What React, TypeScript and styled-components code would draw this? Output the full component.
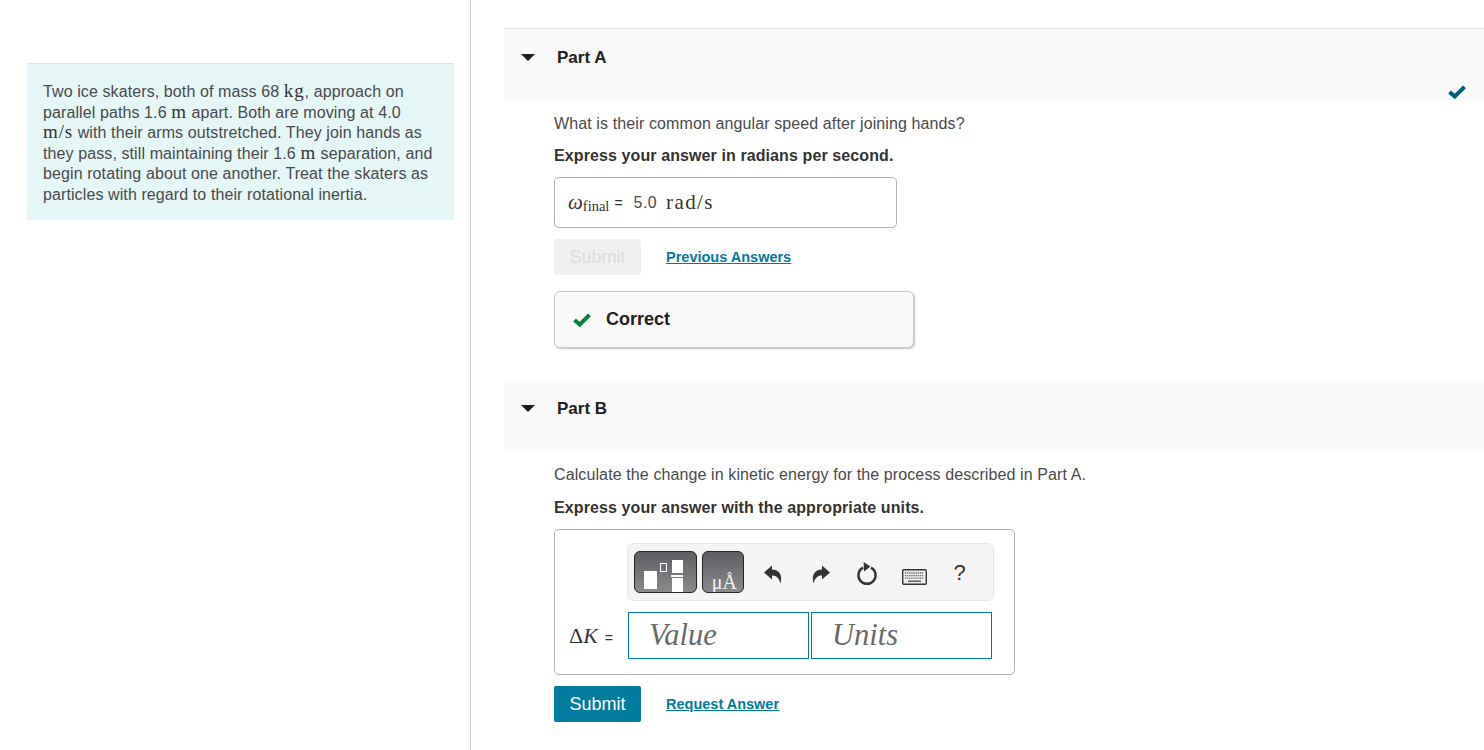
import React from "react";
import styled, { createGlobalStyle } from "styled-components";

const teal = "#007c9e";
const sans = `"Liberation Sans", Arial, sans-serif`;
const serif = `"Liberation Serif", "Times New Roman", serif`;

const Global = createGlobalStyle`
  html, body { margin: 0; padding: 0; background: #fff; }
  body { font-family: ${sans}; color: #333; overflow: hidden; }
`;

const Page = styled.div`
  display: flex;
  width: 1484px;
  height: 750px;
  overflow: hidden;
`;

const Side = styled.aside`
  box-sizing: border-box;
  width: 471px;
  height: 100%;
  flex: none;
  padding: 63px 16px 0 27px;
  border-right: 1px solid #bfd0da;
`;

const Info = styled.div`
  box-sizing: border-box;
  height: 157px;
  padding: 18px 19px 0 16px;
  background: #e5f6f7;
  border-top: 1px solid #d9e5e8;
  font-size: 16px;
  line-height: 20.6px;
  letter-spacing: 0.1px;
  color: #4a4a4a;
`;

const M = styled.span`
  font-family: ${serif};
  font-size: 19px;
  line-height: 0;
  letter-spacing: 0.9px;
  color: #333;
`;

const Main = styled.main`
  position: relative;
  flex: 1;
  padding: 28px 0 0 33px;
`;

const PartHead = styled.div<{ $top?: boolean }>`
  display: flex;
  align-items: flex-start;
  height: ${(p) => (p.$top ? "72px" : "70px")};
  padding: ${(p) => (p.$top ? "19px" : "18px")} 0 0 17px;
  box-sizing: border-box;
  background: #f9f9f9;
  border-top: ${(p) => (p.$top ? "1px solid #e3e3e3" : "none")};
`;

const Caret = styled.span`
  width: 0;
  height: 0;
  margin-top: 6px;
  border-left: 7px solid transparent;
  border-right: 7px solid transparent;
  border-top: 7px solid #1c1c1c;
`;

const PartTitle = styled.h2`
  margin: 0 0 0 22px;
  font-size: 17px;
  font-weight: 700;
  line-height: 20px;
  color: #222;
`;

const DoneMark = styled.svg`
  position: absolute;
  top: 84px;
  left: 977px;
  width: 18px;
  height: 15px;
  color: #005f7d;
`;

const FeedbackMark = styled.svg`
  width: 18px;
  height: 15px;
  color: #07853f;
  flex: none;
`;

const Body = styled.div<{ $gap: number }>`
  padding: 15px 0 0 50px;
  margin-bottom: ${(p) => p.$gap}px;
`;

const Question = styled.p`
  margin: 0;
  font-size: 16px;
  line-height: 18px;
  letter-spacing: 0.11px;
  color: #4a4a4a;
`;

const Hint = styled.p<{ $mt: number }>`
  margin: ${(p) => p.$mt}px 0 12px;
  font-size: 16px;
  font-weight: 700;
  line-height: 18px;
  color: #333;
  letter-spacing: 0.1px;
`;

const AnswerBox = styled.div`
  display: flex;
  align-items: center;
  box-sizing: border-box;
  width: 343px;
  height: 51px;
  padding: 0 13px;
  border: 1px solid #b3b3b3;
  border-radius: 5px;
  color: #333;
`;

const Omega = styled.span`
  font-family: ${serif};
  font-style: italic;
  font-size: 21px;
`;

const Sub = styled.sub`
  font-family: ${serif};
  font-size: 14.5px;
  font-weight: 400;
  vertical-align: -4px;
  line-height: 0;
  margin-top: 6px;
`;

const Eq = styled.span`
  margin: 0 11px 0 5px;
  font-size: 14px;
`;

const Num = styled.span`
  font-size: 16px;
  letter-spacing: 0.4px;
  color: #4a4a4a;
`;

const Unit = styled.span`
  margin-left: 9px;
  font-family: ${serif};
  font-size: 21px;
  letter-spacing: 1.4px;
`;

const Actions = styled.div<{ $mt: number }>`
  display: flex;
  align-items: center;
  gap: 25px;
  margin-top: ${(p) => p.$mt}px;
`;

const SubmitBtn = styled.button<{ $off?: boolean }>`
  width: 87px;
  height: 36px;
  padding: 0;
  border: none;
  border-radius: 2px;
  font-family: ${sans};
  font-size: 18px;
  background: ${(p) => (p.$off ? "#f0f0f0" : teal)};
  color: ${(p) => (p.$off ? "#dcdcdc" : "#fff")};
`;

const LinkText = styled.a`
  font-size: 14.5px;
  font-weight: 700;
  color: ${teal};
  text-decoration: underline;
`;

const Feedback = styled.div`
  display: flex;
  align-items: center;
  gap: 15px;
  box-sizing: border-box;
  width: 360px;
  height: 57px;
  margin-top: 16px;
  padding-left: 18px;
  background: #f9f9f9;
  border: 1px solid #c7c7c7;
  border-radius: 6px;
  box-shadow: 1px 1px 2px #c4c4c4;
  font-size: 18px;
  font-weight: 700;
  color: #222;
`;

const Editor = styled.div`
  box-sizing: border-box;
  width: 461px;
  height: 146px;
  padding: 13px 0 0 14px;
  border: 1px solid #b3b3b3;
  border-radius: 5px;
`;

const Toolbar = styled.div`
  display: flex;
  align-items: center;
  box-sizing: border-box;
  width: 367px;
  height: 58px;
  margin-left: 58px;
  padding-left: 6px;
  background: #f4f4f4;
  border: 1px solid #e6e6e6;
  border-radius: 6px;
`;

const ToolBtn = styled.div<{ $w: number }>`
  position: relative;
  box-sizing: border-box;
  width: ${(p) => p.$w}px;
  height: 42px;
  margin-right: 5px;
  border: 1px solid #222;
  border-radius: 6px;
  background: linear-gradient(#5d5d62, #8b8b8e);
  overflow: hidden;
  flex: none;
`;

const UnitGlyph = styled.span`
  position: absolute;
  right: 6px;
  bottom: -1px;
  font-family: ${serif};
  font-size: 20px;
  line-height: 22px;
  color: #f2f2f2;
  white-space: nowrap;
`;

const IconSlot = styled.span<{ $w: number; $dy?: number }>`
  display: flex;
  justify-content: center;
  align-items: center;
  box-sizing: border-box;
  width: ${(p) => p.$w}px;
  height: 42px;
  padding-top: ${(p) => p.$dy ?? 4}px;
  color: #333;
  font-size: 22px;
  flex: none;
`;

const FieldRow = styled.div`
  display: flex;
  align-items: center;
  margin-top: 11px;
`;

const Label = styled.div`
  display: flex;
  align-items: baseline;
  width: 59px;
  font-family: ${serif};
  font-size: 22px;
  font-style: italic;
  color: #333;
`;

const Upright = styled.span`
  font-style: normal;
`;

const EqSmall = styled.span`
  margin-left: 7px;
  font-family: ${sans};
  font-style: normal;
  font-size: 14px;
`;

const Field = styled.div`
  box-sizing: border-box;
  width: 181px;
  height: 47px;
  margin-right: 2px;
  padding-left: 20px;
  border: 1px solid ${teal};
  font-family: ${serif};
  font-size: 30.5px;
  font-style: italic;
  line-height: 44px;
  color: #6a6a6a;
`;

const checkPath = "M1.5 8 L6.8 12.5 L16.5 2.8";

function TemplateIcon() {
  return (
    <svg width="61" height="40" viewBox="0 0 61 40">
      <rect x="9" y="19" width="13" height="18" fill="#fff" />
      <rect x="25.5" y="11.5" width="6" height="8" fill="none" stroke="#fff" />
      <rect x="37" y="8" width="11" height="13" fill="#fff" />
      <rect x="36" y="23" width="12" height="2" fill="#fff" />
      <rect x="37" y="26" width="11" height="14" fill="#fff" />
    </svg>
  );
}

function ArrowIcon({ flip }: { flip?: boolean }) {
  return (
    <svg width="18" height="19" viewBox="0 0 18 19">
      <path
        d="M0 7.5 L8 0.5 V4.5 C14 4.5 19 9 16.5 18.5 C15 13 12.5 10.5 8 10.5 V14.5 Z"
        fill="#333"
        transform={flip ? "matrix(-1 0 0 1 18 0)" : undefined}
      />
    </svg>
  );
}

function ResetIcon() {
  return (
    <svg width="24" height="26" viewBox="0 0 24 26">
      <path d="M8 6.6 A8.6 8.6 0 1 0 16 6.6" fill="none" stroke="#333" strokeWidth="2.4" />
      <path d="M8.6 1 L15.4 5.6 L9 10.4 Z" fill="#333" />
    </svg>
  );
}

function KeyboardIcon() {
  return (
    <svg width="25" height="16" viewBox="0 0 25 16">
      <rect x="0.7" y="0.7" width="23.6" height="14.6" rx="1.2" fill="#f0f0f0" stroke="#333" strokeWidth="1.4" />
      <path d="M3 4h19M3 6.6h19M3 9.2h19" stroke="#666" strokeWidth="1.3" strokeDasharray="1.3 .8" />
      <path d="M6 12.2h13" stroke="#555" strokeWidth="1.4" />
    </svg>
  );
}

export default function App() {
  return (
    <Page>
      <Global />
      <Side>
        <Info>
          Two ice skaters, both of mass 68 <M>kg</M>, approach on parallel paths 1.6 <M>m</M> apart. Both are moving at
          4.0 <M>m/s</M> with their arms outstretched. They join hands as they pass, still maintaining their 1.6 <M>m</M>{" "}
          separation, and begin rotating about one another. Treat the skaters as particles with regard to their
          rotational inertia.
        </Info>
      </Side>
      <Main>
        <DoneMark viewBox="0 0 18 15">
          <path d={checkPath} fill="none" stroke="currentColor" strokeWidth="4" />
        </DoneMark>
        <PartHead $top>
          <Caret />
          <PartTitle>Part A</PartTitle>
        </PartHead>
        <Body $gap={33}>
          <Question>What is their common angular speed after joining hands?</Question>
          <Hint $mt={14}>Express your answer in radians per second.</Hint>
          <AnswerBox>
            <Omega>ω</Omega>
            <Sub>final</Sub>
            <Eq>=</Eq>
            <Num>5.0</Num>
            <Unit>rad/s</Unit>
          </AnswerBox>
          <Actions $mt={11}>
            <SubmitBtn $off>Submit</SubmitBtn>
            <LinkText>Previous Answers</LinkText>
          </Actions>
          <Feedback>
            <FeedbackMark viewBox="0 0 18 15">
              <path d={checkPath} fill="none" stroke="currentColor" strokeWidth="4" />
            </FeedbackMark>
            Correct
          </Feedback>
        </Body>
        <PartHead>
          <Caret />
          <PartTitle>Part B</PartTitle>
        </PartHead>
        <Body $gap={0}>
          <Question>Calculate the change in kinetic energy for the process described in Part A.</Question>
          <Hint $mt={15}>Express your answer with the appropriate units.</Hint>
          <Editor>
            <Toolbar>
              <ToolBtn $w={63}>
                <TemplateIcon />
              </ToolBtn>
              <ToolBtn $w={42}>
                <UnitGlyph>μÅ</UnitGlyph>
              </ToolBtn>
              <IconSlot $w={47}>
                <ArrowIcon />
              </IconSlot>
              <IconSlot $w={50}>
                <ArrowIcon flip />
              </IconSlot>
              <IconSlot $w={41}>
                <ResetIcon />
              </IconSlot>
              <IconSlot $w={54} $dy={10}>
                <KeyboardIcon />
              </IconSlot>
              <IconSlot $w={37} $dy={2}>?</IconSlot>
            </Toolbar>
            <FieldRow>
              <Label>
                <Upright>Δ</Upright>K<EqSmall>=</EqSmall>
              </Label>
              <Field>Value</Field>
              <Field>Units</Field>
            </FieldRow>
          </Editor>
          <Actions $mt={11}>
            <SubmitBtn>Submit</SubmitBtn>
            <LinkText>Request Answer</LinkText>
          </Actions>
        </Body>
      </Main>
    </Page>
  );
}
